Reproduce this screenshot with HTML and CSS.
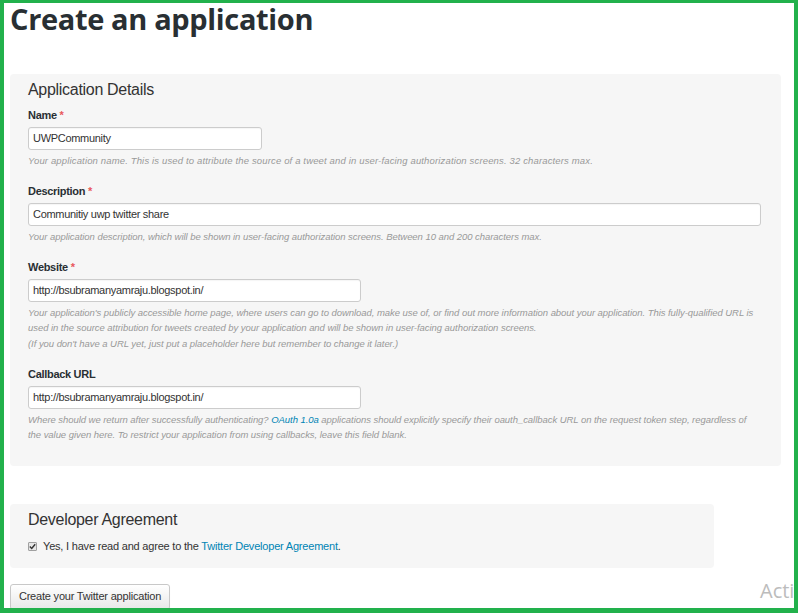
FILE: index.html
```html
<!DOCTYPE html>
<html>
<head>
<meta charset="utf-8">
<link rel="stylesheet" href="styles.css">
</head>
<body>
<div class="frame">
  <div class="page">
    <h1 class="title">Create an application</h1>

    <section class="panel panel-details">
      <h2 class="panel-heading">Application Details</h2>

      <div class="field">
        <label class="label">Name <span class="req">*</span></label>
        <input class="input input-name" type="text" value="UWPCommunity">
        <p class="help help-wide">Your application name. This is used to attribute the source of a tweet and in user-facing authorization screens. 32 characters max.</p>
      </div>

      <div class="field">
        <label class="label">Description <span class="req">*</span></label>
        <input class="input input-desc" type="text" value="Communitiy uwp twitter share">
        <p class="help">Your application description, which will be shown in user-facing authorization screens. Between 10 and 200 characters max.</p>
      </div>

      <div class="field">
        <label class="label">Website <span class="req">*</span></label>
        <input class="input input-url" type="text" value="http://bsubramanyamraju.blogspot.in/">
        <p class="help">Your application's publicly accessible home page, where users can go to download, make use of, or find out more information about your application. This fully-qualified URL is<br>used in the source attribution for tweets created by your application and will be shown in user-facing authorization screens.<br>(If you don't have a URL yet, just put a placeholder here but remember to change it later.)</p>
      </div>

      <div class="field">
        <label class="label">Callback URL</label>
        <input class="input input-url" type="text" value="http://bsubramanyamraju.blogspot.in/">
        <p class="help">Where should we return after successfully authenticating? <a class="link" href="#">OAuth 1.0a</a> applications should explicitly specify their oauth_callback URL on the request token step, regardless of<br>the value given here. To restrict your application from using callbacks, leave this field blank.</p>
      </div>
    </section>

    <section class="panel panel-agree">
      <h2 class="panel-heading">Developer Agreement</h2>
      <div class="agree-row">
        <span class="checkbox"><svg width="7" height="7" viewBox="0 0 7 7"><path d="M0.8 3.6 L2.7 5.5 L6.2 1.2" fill="none" stroke="#333" stroke-width="1.4"/></svg></span>
        <span class="agree-text">Yes, I have read and agree to the <a class="link" href="#">Twitter Developer Agreement</a>.</span>
      </div>
    </section>

    <button class="btn" type="button">Create your Twitter application</button>
  </div>
  <div class="watermark">Acti</div>
</div>
</body>
</html>
```

FILE: styles.css
```css
html, body {
  margin: 0;
  padding: 0;
  background: #fff;
}

.frame {
  position: relative;
  width: 798px;
  height: 613px;
  box-sizing: border-box;
  border-style: solid;
  border-color: #22b14c;
  border-width: 3px 4px 5px 4px;
  overflow: hidden;
  font-family: "Liberation Sans", Arial, sans-serif;
  color: #333;
}

.page {
  padding-left: 6px;
  padding-top: 1px;
}

.title {
  margin: 0 0 40px 0;
  font-family: "Open Sans", "Liberation Sans", sans-serif;
  font-weight: 700;
  font-size: 29px;
  line-height: 30px;
  color: #292f33;
  letter-spacing: -0.35px;
}

.panel {
  background: #f6f6f6;
  border-radius: 4px;
  box-sizing: border-box;
  padding: 6px 18px 0 18px;
}

.panel-details {
  width: 771px;
  height: 392px;
}

.panel-agree {
  width: 704px;
  height: 64px;
  margin-top: 38px;
}

.panel-heading {
  margin: 0;
  font-weight: 400;
  font-size: 16px;
  line-height: 20px;
  color: #333;
  letter-spacing: -0.3px;
}

.field {
  margin-top: 8px;
  display: flex;
  flex-direction: column;
  align-items: flex-start;
}

.field + .field {
  margin-top: 16px;
}

.label {
  font-weight: 700;
  font-size: 11px;
  line-height: 14px;
  color: #292f33;
  letter-spacing: -0.3px;
  margin-bottom: 4.5px;
}

.req {
  color: #e8585d;
}

.input {
  box-sizing: border-box;
  height: 23px;
  border: 1px solid #ccc;
  border-radius: 3px;
  background: #fff;
  padding: 0 4px;
  margin: 0;
  font-family: "Liberation Sans", Arial, sans-serif;
  font-size: 11px;
  color: #333;
  letter-spacing: -0.3px;
  box-shadow: inset 0 1px 1px rgba(0,0,0,0.04);
}

.input-name { width: 234px; }
.input-desc { width: 733px; }
.input-url { width: 333px; }

.help {
  margin: 3px 0 0 0;
  font-style: italic;
  font-size: 9.5px;
  line-height: 15.5px;
  color: #999;
  white-space: nowrap;
  letter-spacing: -0.05px;
}

.help-wide {
  letter-spacing: 0.15px;
}

.link {
  color: #0084b4;
  text-decoration: none;
  font-style: normal;
}

.help .link {
  font-style: italic;
}

.agree-row {
  display: flex;
  align-items: center;
  margin-top: 9px;
  height: 14px;
}

.checkbox {
  width: 7px;
  height: 7px;
  border: 1px solid #a0a0a0;
  border-radius: 1px;
  background: #e6e6e6;
  display: flex;
  align-items: center;
  justify-content: center;
  margin-right: 6px;
}

.agree-text {
  font-size: 11px;
  line-height: 14px;
  color: #333;
  letter-spacing: -0.2px;
}

.btn {
  display: block;
  margin-top: 16px;
  width: 160px;
  height: 26px;
  box-sizing: border-box;
  border: 1px solid #c8c8c8;
  border-radius: 3px;
  background: linear-gradient(#fff, #e8e8e8);
  font-family: "Liberation Sans", Arial, sans-serif;
  font-size: 11px;
  line-height: 20px;
  color: #333;
  letter-spacing: -0.2px;
  padding: 0 0 2px 0;
  text-align: center;
  box-shadow: 0 1px 1px rgba(0,0,0,0.06);
}

.watermark {
  position: absolute;
  left: 756px;
  top: 575px;
  font-family: "Open Sans", "Noto Sans", sans-serif;
  font-size: 20px;
  line-height: 26px;
  color: #bcbcbc;
  white-space: nowrap;
}
```
